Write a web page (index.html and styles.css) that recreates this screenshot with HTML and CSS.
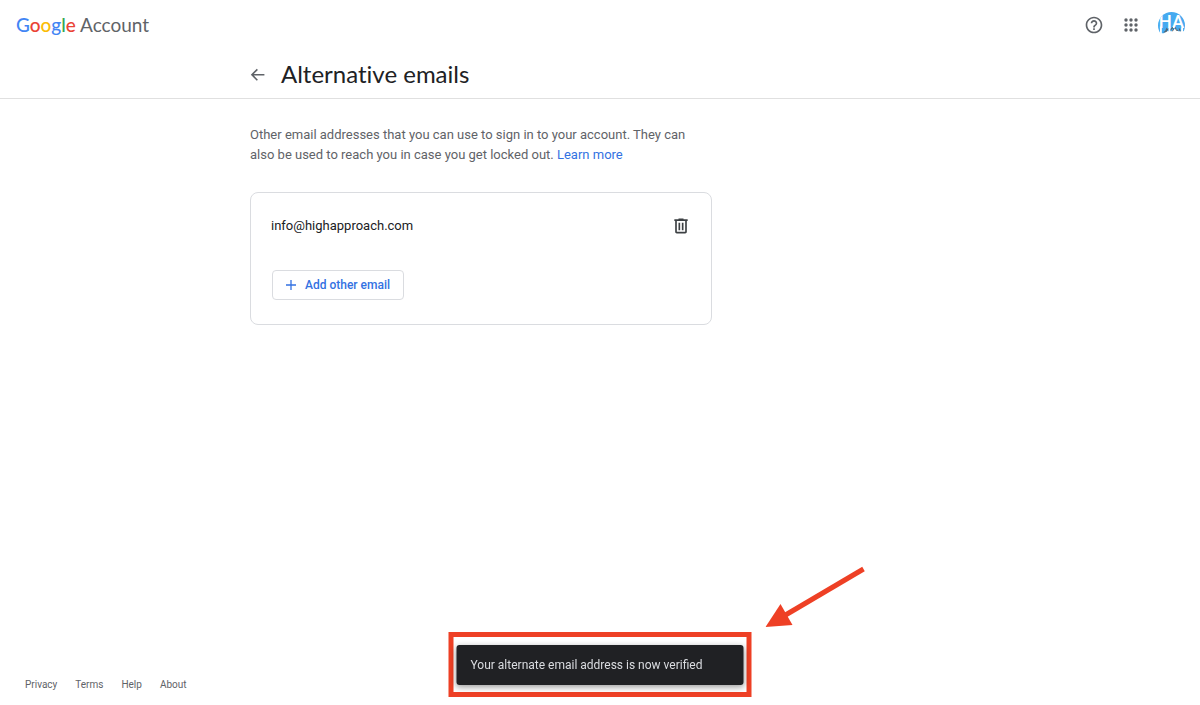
FILE: index.html
```
<!DOCTYPE html>
<html lang="en">
<head>
    <meta charset="UTF-8">
    <meta name="viewport" content="width=device-width, initial-scale=1.0">
    <title>Alternative emails</title>
    <link rel="stylesheet" href="styles.css">
</head>
<body>

<header class="topbar">
    <a class="logo" href="#"><span class="google"><span class="blue">G</span><span class="red">o</span><span class="yellow">o</span><span class="blue">g</span><span class="green">l</span><span class="red">e</span></span> Account</a>
    <div class="actions">
        <button class="icon-button" type="button" aria-label="Help">
            <svg width="20" height="20" viewBox="0 0 24 24" fill="currentColor"><path d="M11 18h2v-2h-2v2zm1-16C6.480 2 2 6.480 2 12s4.480 10 10 10 10-4.480 10-10S17.520 2 12 2zm0 18c-4.410 0-8-3.590-8-8s3.590-8 8-8 8 3.590 8 8-3.590 8-8 8zm0-14c-2.210 0-4 1.790-4 4h2c0-1.100.9-2 2-2s2 .9 2 2c0 2-3 1.750-3 5h2c0-2.250 3-2.500 3-5 0-2.210-1.790-4-4-4z"/></svg>
        </button>
        <button class="icon-button" type="button" aria-label="Google apps">
            <svg width="20" height="20" viewBox="0 0 20 20" fill="currentColor">
                <circle cx="5" cy="5" r="1.700"/><circle cx="10" cy="5" r="1.700"/><circle cx="15" cy="5" r="1.700"/>
                <circle cx="5" cy="10" r="1.700"/><circle cx="10" cy="10" r="1.700"/><circle cx="15" cy="10" r="1.700"/>
                <circle cx="5" cy="15" r="1.700"/><circle cx="10" cy="15" r="1.700"/><circle cx="15" cy="15" r="1.700"/>
            </svg>
        </button>
        <button class="icon-button avatar" type="button" aria-label="Profile">
            <svg width="27" height="27" viewBox="0 0 28 28">
                <clipPath id="round"><circle cx="14" cy="14" r="14"/></clipPath>
                <g clip-path="url(#round)">
                    <rect width="28" height="28" fill="#fff"/>
                    <path d="M0 0h28v20h-7l-3-3-4 3H9l-3 2H0z" fill="#45aaf0"/>
                    <text class="initials" x="14" y="17" text-anchor="middle">HA</text>
                    <path d="M3 24v-9M12 22v-6M25 24v-8" stroke="#fff" stroke-width="2"/>
                    <path d="M6 21l2-1 1-3 1 1-2 3M13 19l2-3 1 2-1 2M18 16l1 3 2 0M22 17l1 3" fill="none" stroke="#555" stroke-width="1"/>
                </g>
            </svg>
        </button>
    </div>
</header>

<div class="titlebar">
    <div class="container title-row">
        <a class="back" href="#" aria-label="Back">
            <svg width="16" height="16" viewBox="2 1 20 20" fill="currentColor"><path d="M20 11H6.830l5.080-5.090L10.500 4.500 3 12l7.500 7.500 1.410-1.410L6.830 13H20z"/></svg>
        </a>
        <h1>Alternative emails</h1>
    </div>
</div>

<main class="container">
    <p class="intro">Other email addresses that you can use to sign in to your account. They can also be used to reach you in case you get locked out. <a href="#">Learn more</a></p>

    <section class="card">
        <div class="email-row">
            <span>info@highapproach.com</span>
            <button class="icon-button delete" type="button" aria-label="Delete email">
                <svg width="20" height="20" viewBox="0 0 24 24" fill="currentColor"><path d="M15 4V3H9v1H4v2h1v13c0 1.100.9 2 2 2h10c1.100 0 2-.9 2-2V6h1V4h-5zm2 15H7V6h10v13zM9 8h2v9H9zm4 0h2v9h-2z"/></svg>
            </button>
        </div>
        <button class="add-button" type="button">
            <svg width="12" height="12" viewBox="0 0 12 12" stroke="currentColor" stroke-width="1.300"><path d="M6 1v10M1 6h10"/></svg>
            Add other email
        </button>
    </section>
</main>

<footer class="footer">
    <a href="#">Privacy</a>
    <a href="#">Terms</a>
    <a href="#">Help</a>
    <a href="#">About</a>
</footer>

<div class="highlight">
    <div class="toast" role="status">Your alternate email address is now verified</div>
    <svg class="arrow" width="100" height="64" viewBox="0 0 100 64">
        <path d="M98 3L20 49" stroke="#ee4025" stroke-width="5"/>
        <path d="M0 61L15 38L27 59z" fill="#ee4025"/>
    </svg>
</div>

</body>
</html>
```
FILE: styles.css
```
* {
    box-sizing: border-box;
}
body {
    font-family: Roboto, Arial, sans-serif;
    font-size: 13px;
    line-height: 20px;
    color: #202124;
    background: #fff;
    margin: 0;
    min-height: 100vh;
    display: flex;
    flex-direction: column;
}
a {
    color: #3372e2;
    text-decoration: none;
}
button {
    font-family: inherit;
    cursor: pointer;
}
svg {
    display: block;
}
.topbar {
    display: flex;
    align-items: center;
    justify-content: space-between;
    height: 50px;
    padding: 0 15px 0 16px;
}
.logo {
    font-family: Lato, sans-serif;
    font-size: 19px;
    color: #5f6368;
}
.google {
    font-weight: 500;
}
.blue {
    color: #4285f4;
}
.red {
    color: #ea4335;
}
.yellow {
    color: #fbbc05;
}
.green {
    color: #34a853;
}
.actions {
    display: flex;
    align-items: center;
    gap: 17px;
}
.icon-button {
    padding: 0;
    border: none;
    background: none;
    color: #5f6368;
}
.avatar {
    border-radius: 50%;
}
.initials {
    font-family: Roboto, sans-serif;
    font-size: 19px;
    font-weight: 500;
    fill: #fff;
}
.titlebar {
    border-bottom: 1px solid #e0e0e0;
}
.container {
    width: 100%;
    max-width: 700px;
    margin: 0 auto;
}
.title-row {
    display: flex;
    align-items: center;
    gap: 15px;
    height: 48px;
}
.back {
    color: #5f6368;
}
h1 {
    font-family: Lato, sans-serif;
    font-size: 24px;
    line-height: 32px;
    font-weight: 400;
    font-variant-ligatures: none;
    margin: 0;
}
main {
    flex: 1;
}
.intro {
    color: #5f6368;
    max-width: 456px;
    margin: 26px 0 27px;
}
.card {
    max-width: 462px;
    padding: 20px;
    border: 1px solid #dadce0;
    border-radius: 8px;
}
.email-row {
    display: flex;
    align-items: center;
    justify-content: space-between;
    height: 26px;
}
.delete {
    color: #3c4043;
}
.add-button {
    display: flex;
    align-items: center;
    gap: 8px;
    height: 30px;
    margin: 31px 0 4px 1px;
    padding: 0 13px 0 12px;
    border: 1px solid #dadce0;
    border-radius: 4px;
    background: #fff;
    color: #3372e2;
    font-size: 12px;
    font-weight: 500;
}
.footer {
    display: flex;
    gap: 18px;
    padding: 10px 25px;
    font-size: 10px;
}
.footer a {
    color: #5f6368;
}
.highlight {
    position: fixed;
    bottom: 8px;
    left: 50%;
    width: 303px;
    transform: translateX(-50%);
    padding: 8px 3px 7px;
    border: 5px solid #ee4025;
}
.toast {
    padding: 10px 14px;
    border-radius: 3px;
    background: #202124;
    color: #dadce0;
    font-size: 12px;
    box-shadow: 0 2px 6px rgba(0, 0, 0, 0.4);
}
.arrow {
    position: absolute;
    left: 312px;
    bottom: 62px;
}
```
